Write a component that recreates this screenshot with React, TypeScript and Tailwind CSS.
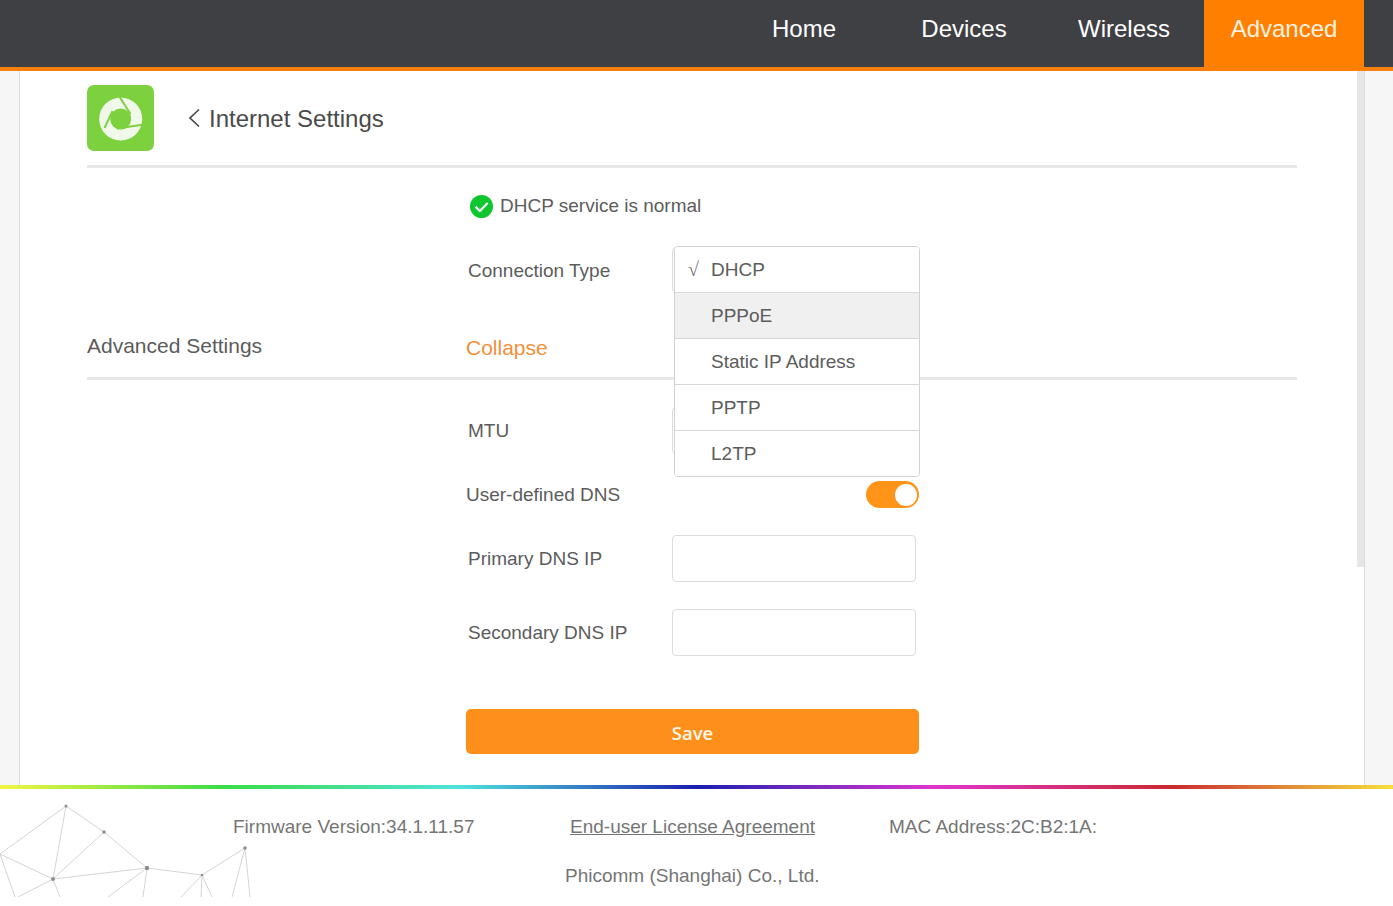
import React from "react";

const font = "font-['Liberation_Sans',Arial,sans-serif]";

function Logo() {
  return (
    <div className="w-[67px] h-[66px] rounded-[7px] bg-[#7dd13f] shrink-0">
      <svg viewBox="0 0 67 66" width="67" height="66">
        <circle cx="33.7" cy="34" r="21.5" fill="#f0f8e9" />
        <circle cx="33.7" cy="34" r="10.5" fill="#7dd13f" />
        <path d="M32 11 L43.5 29 M57 39.5 L30 43.5 M17.5 43 L25.5 26" stroke="#7dd13f" strokeWidth="2" fill="none" />
      </svg>
    </div>
  );
}

function Network() {
  const lines = [
    [0, 69, 66, 21], [66, 21, 53, 94], [66, 21, 104, 47], [104, 47, 147, 83], [104, 47, 53, 94],
    [53, 94, 147, 83], [0, 69, 53, 94], [0, 69, 15, 112], [53, 94, 18, 112], [53, 94, 60, 112],
    [147, 83, 108, 112], [147, 83, 143, 112], [147, 83, 202, 90], [202, 90, 245, 63],
    [202, 90, 181, 112], [202, 90, 201, 112], [202, 90, 212, 112], [245, 63, 232, 112], [245, 63, 250, 112],
  ];
  const dots = [[66, 21, 1.5], [104, 47, 1.8], [147, 83, 2.2], [53, 94, 2], [202, 90, 1.3], [245, 63, 1.8]];
  return (
    <svg className="absolute left-0 top-0" width="260" height="112" viewBox="0 0 260 112">
      {lines.map((l, i) => (
        <line key={i} x1={l[0]} y1={l[1]} x2={l[2]} y2={l[3]} stroke="#cfcfcf" strokeWidth="0.9" />
      ))}
      {dots.map((d, i) => (
        <circle key={i} cx={d[0]} cy={d[1]} r={d[2]} fill="#8f8f8f" />
      ))}
    </svg>
  );
}

function Field({ label }: { label: string }) {
  return (
    <div className="flex items-center h-[47px] mt-[27px] ml-[381px]">
      <span className="w-[204px] text-[19px] pt-[1px]">{label}</span>
      <div className="w-[244px] h-[47px] border border-[#dcdcdc] rounded-[4px] bg-white" />
    </div>
  );
}

function Menu() {
  const items = ["DHCP", "PPPoE", "Static IP Address", "PPTP", "L2TP"];
  return (
    <div className="absolute left-[654px] top-[175px] w-[246px] h-[231px] bg-white border border-[#d2d2d2] rounded-[4px] overflow-hidden z-10">
      {items.map((t, i) => (
        <div
          key={t}
          className={
            "relative flex items-center pl-[36px] pt-[1px] text-[19px] border-[#d8d8d8] " +
            (i > 0 ? "h-[46px] border-t " : "h-[45px] ") +
            (i === 1 ? "bg-[#f0f0f0]" : "bg-white")
          }
        >
          {i === 0 && <span className="absolute left-[13px] top-[10px] text-[20px] leading-[24px] text-[#777] font-['Liberation_Serif',serif]">√</span>}
          {t}
        </div>
      ))}
    </div>
  );
}

export default function App() {
  return (
    <div className={`${font} h-screen w-full overflow-hidden flex flex-col bg-white text-[#5c5c5c]`}>
      <header className="h-[71px] shrink-0 bg-[#3f4044] border-b-[4px] border-[#f58010] flex justify-end pr-[29px]">
        {["Home", "Devices", "Wireless"].map((t) => (
          <a key={t} className="w-[160px] h-[67px] flex items-center justify-center pb-[10px] text-[24px] text-white">{t}</a>
        ))}
        <a className="w-[160px] h-[71px] bg-[#ff7f00] flex items-center justify-center pb-[14px] text-[24px] text-[#fff3e0]">Advanced</a>
      </header>

      <main className="flex-1 min-h-0 bg-[#f6f6f6] px-[19px]">
        <div className="relative h-full w-[1346px] bg-white border-x border-[#dcdcdc] pl-[67px] pr-[67px]">
          <div className="absolute right-0 top-0 w-[7px] h-[496px] bg-[#e6e6e6]" />
          <div className="flex items-start h-[97px] pt-[14px] border-b-[3px] border-[#e8e8e8]">
            <Logo />
            <div className="flex items-center h-[66px] ml-[34px] text-[24px] text-[#4a4a4a]">
              <svg width="12" height="20" viewBox="0 0 12 20" className="mr-[9px]">
                <path d="M11 1.5 L2 10 L11 18.5" stroke="#4a4a4a" strokeWidth="1.7" fill="none" />
              </svg>
              <span className="pt-[1px]">Internet Settings</span>
            </div>
          </div>

          <div className="flex items-start h-[79px] ml-[383px] pt-[27px]">
            <svg width="23" height="23" viewBox="0 0 24 24">
              <circle cx="12" cy="12" r="12" fill="#0fc62f" />
              <path d="M5.8 12.2 L10.3 16.6 L18.4 8.4" stroke="#fff" strokeWidth="2.2" fill="none" />
            </svg>
            <span className="ml-[7px] text-[19px] leading-[24px] -mt-[1px]">DHCP service is normal</span>
          </div>

          <div className="flex items-center h-[46px] ml-[381px]">
            <span className="w-[204px] text-[19px] pt-[2px]">Connection Type</span>
            <div className="w-[244px] h-[46px] border border-[#dcdcdc] rounded-[4px]" />
          </div>

          <div className="flex items-end h-[87px] pb-[14px] border-b-[3px] border-[#e8e8e8] text-[21px]">
            <span className="w-[379px] mb-[2px]">Advanced Settings</span>
            <span className="text-[#f0913a]">Collapse</span>
          </div>

          <Field label="MTU" />
          <div className="flex items-center justify-between h-[27px] mt-[27px] ml-[379px] w-[453px]">
            <span className="text-[19px] pt-[1px]">User-defined DNS</span>
            <div className="w-[53px] h-[27px] rounded-full bg-[#ff9419] flex items-center justify-end pr-[2px]">
              <div className="w-[22px] h-[22px] rounded-full bg-white" />
            </div>
          </div>
          <Field label="Primary DNS IP" />
          <Field label="Secondary DNS IP" />

          <button className="block mt-[53px] ml-[379px] w-[453px] h-[45px] rounded-[5px] bg-[#ff8f1b] text-[#fff8ec] text-[18.5px] font-['Open_Sans',sans-serif] font-semibold pt-[2px]">
            Save
          </button>

          <Menu />
        </div>
      </main>

      <footer className="relative h-[121px] shrink-0 bg-white text-[#757575] text-[19px]">
        <div className="h-[4px] bg-[linear-gradient(90deg,#f3f542,#3bdc45_16%,#4fe2dc_33%,#1a1fb0_50%,#df35d0_67%,#c92a30_84%,#f7e03c)]" />
        <Network />
        <div className="relative flex pl-[233px] pt-[27px] leading-[22px]">
          <span className="w-[337px]">Firmware Version:34.1.11.57</span>
          <a className="w-[319px] underline">End-user License Agreement</a>
          <span>MAC Address:2C:B2:1A:</span>
        </div>
        <div className="relative pl-[565px] pt-[27px] leading-[22px]">Phicomm (Shanghai) Co., Ltd.</div>
      </footer>
    </div>
  );
}
